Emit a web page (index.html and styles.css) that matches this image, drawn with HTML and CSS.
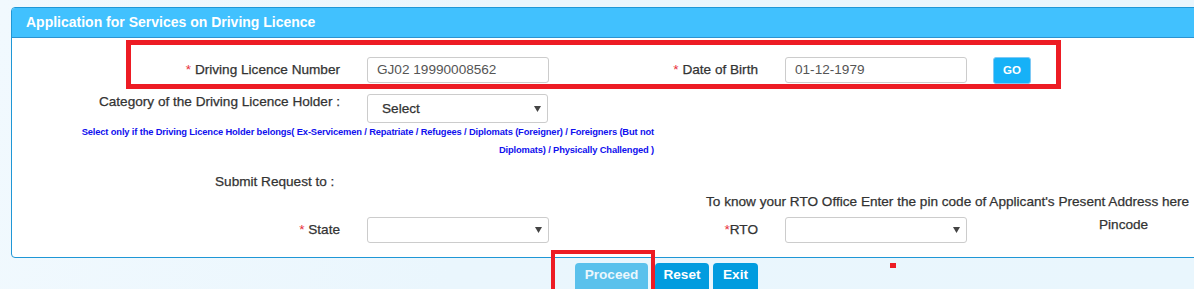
FILE: index.html
```html
<!DOCTYPE html>
<html lang="en">
<head>
<meta charset="utf-8">
<title>Application for Services on Driving Licence</title>
<link rel="stylesheet" href="styles.css">
</head>
<body>
<div class="page">
  <div class="panel">
    <div class="panel-head">Application for Services on Driving Licence</div>
    <div class="panel-body">
      <div class="row row-first">
        <label class="lbl lbl-a"><span class="req">*</span> Driving Licence Number</label>
        <div class="input">GJ02 19990008562</div>
        <label class="lbl lbl-b"><span class="req">*</span> Date of Birth</label>
        <div class="input">01-12-1979</div>
        <button class="go" type="button">GO</button>
      </div>
      <div class="row row-cat">
        <label class="lbl lbl-a lbl-top">Category of the Driving Licence Holder :</label>
        <div class="select select-tall"><span class="sel-text">Select</span><svg class="caret" width="7" height="6" viewBox="0 0 7 6"><path d="M0 0H7L3.5 6Z" fill="#444"/></svg></div>
      </div>
      <p class="note">Select only if the Driving Licence Holder belongs( Ex-Servicemen / Repatriate / Refugees / Diplomats (Foreigner) / Foreigners (But not<br>Diplomats) / Physically Challenged )</p>
      <div class="submit-to">Submit Request to :</div>
      <div class="rto-hint">To know your RTO Office Enter the pin code of Applicant's Present Address here</div>
      <div class="row row-state">
        <label class="lbl lbl-a"><span class="req">*</span> State</label>
        <div class="select"><span class="sel-text"></span><svg class="caret" width="7" height="6" viewBox="0 0 7 6"><path d="M0 0H7L3.5 6Z" fill="#444"/></svg></div>
        <label class="lbl lbl-b"><span class="req">*</span>RTO</label>
        <div class="select"><span class="sel-text"></span><svg class="caret" width="7" height="6" viewBox="0 0 7 6"><path d="M0 0H7L3.5 6Z" fill="#444"/></svg></div>
        <label class="lbl pincode">Pincode</label>
      </div>
    </div>
  </div>
  <div class="actions">
    <button class="btn btn-light" type="button">Proceed</button>
    <button class="btn btn-reset" type="button">Reset</button>
    <button class="btn btn-exit" type="button">Exit</button>
  </div>
</div>
<div class="mark mark-top"></div>
<div class="mark mark-proceed"></div>
<div class="mark-dot"></div>
</body>
</html>
```
FILE: styles.css
```css
html, body {
  margin: 0;
  padding: 0;
}
body {
  width: 1194px;
  height: 289px;
  overflow: hidden;
  background: linear-gradient(100deg, #f1f9fe 0%, #eaf6fd 40%, #e9f6fd 100%);
  font-family: "Liberation Sans", Arial, sans-serif;
  color: #333;
  position: relative;
}
.page {
  padding: 7px 0 0 11px;
}
.panel {
  width: 1200px;
  background: #fff;
  border: 1px solid #1f97d6;
  border-radius: 4px 0 0 4px;
  box-sizing: border-box;
}
.panel-head {
  height: 29px;
  background: #41c1fe;
  border-bottom: 1px solid #2b93d1;
  border-radius: 3px 0 0 0;
  color: #fff;
  font-weight: bold;
  font-size: 14px;
  line-height: 28px;
  padding-left: 14px;
}
.panel-body {
  padding-bottom: 14px;
}
.row {
  display: flex;
  align-items: center;
}
.row-first {
  margin-top: 19px;
  height: 26px;
}
.lbl,
.submit-to,
.rto-hint,
.sel-text {
  -webkit-text-stroke: 0.25px #333;
}
.lbl {
  font-size: 13.6px;
  color: #333;
  text-align: right;
  line-height: 16px;
}
.lbl-a {
  width: 328px;
  margin-right: 27px;
}
.lbl-b {
  width: 209px;
  margin-right: 27px;
}
.req {
  color: #e8303a;
  -webkit-text-stroke: 0;
}
.input {
  width: 182px;
  height: 26px;
  box-sizing: border-box;
  border: 1px solid #ccc;
  border-radius: 3px;
  font-size: 13.6px;
  color: #555;
  padding-left: 9px;
  line-height: 24px;
}
.go {
  margin-left: 26px;
  width: 38px;
  height: 27px;
  background: #16b1f7;
  border: 1px solid #7ec9f5;
  border-radius: 3px;
  color: #fff;
  font-family: "Liberation Sans", Arial, sans-serif;
  font-weight: bold;
  font-size: 11.5px;
  padding: 0;
}
.row-cat {
  margin-top: 11px;
  align-items: flex-start;
}
.lbl-top {
  padding-top: 0;
}
.select {
  width: 182px;
  height: 26px;
  box-sizing: border-box;
  border: 1px solid #ccc;
  border-radius: 3px;
  display: flex;
  align-items: center;
  justify-content: space-between;
  padding: 0 6px 0 14px;
  font-size: 13.6px;
  color: #333;
}
.select-tall {
  height: 29px;
  width: 181px;
}
.caret {
  display: block;
}
.note {
  margin: 0;
  width: 642px;
  text-align: right;
  font-size: 9.35px;
  font-weight: bold;
  line-height: 18px;
  color: #1010ee;
  letter-spacing: -0.15px;
}
.submit-to {
  margin-top: 14px;
  padding-left: 203px;
  font-size: 13.6px;
  line-height: 18px;
}
.rto-hint {
  margin-top: 2px;
  padding-left: 694px;
  font-size: 13.6px;
  line-height: 18px;
  white-space: nowrap;
}
.row-state {
  margin-top: 6px;
  height: 26px;
}
.pincode {
  align-self: flex-start;
  margin-left: 132px;
  text-align: left;
}
.actions {
  display: flex;
  padding-left: 564px;
  margin-top: 5px;
}
.btn {
  font-family: "Liberation Sans", Arial, sans-serif;
  font-weight: bold;
  font-size: 13.6px;
  color: #fff;
  border: none;
  border-radius: 4px 4px 0 0;
  height: 26px;
  padding: 0 0 2px;
  line-height: 24px;
}
.btn-light {
  width: 73px;
  background: #5ac1ec;
  color: #eaf7fd;
}
.btn-reset {
  width: 54px;
  margin-left: 7px;
  background: #019cdf;
}
.btn-exit {
  width: 45px;
  margin-left: 4px;
  background: #019cdf;
}
.mark {
  position: absolute;
  border: 5px solid #ed1c24;
  box-sizing: border-box;
}
.mark-top {
  left: 126px;
  top: 40px;
  width: 935px;
  height: 49px;
}
.mark-proceed {
  left: 551px;
  top: 250px;
  width: 104px;
  height: 39px;
  border-width: 4px 4px 0 4px;
}
.mark-dot {
  position: absolute;
  left: 890px;
  top: 263px;
  width: 6px;
  height: 5px;
  background: #ed1c24;
}
```
